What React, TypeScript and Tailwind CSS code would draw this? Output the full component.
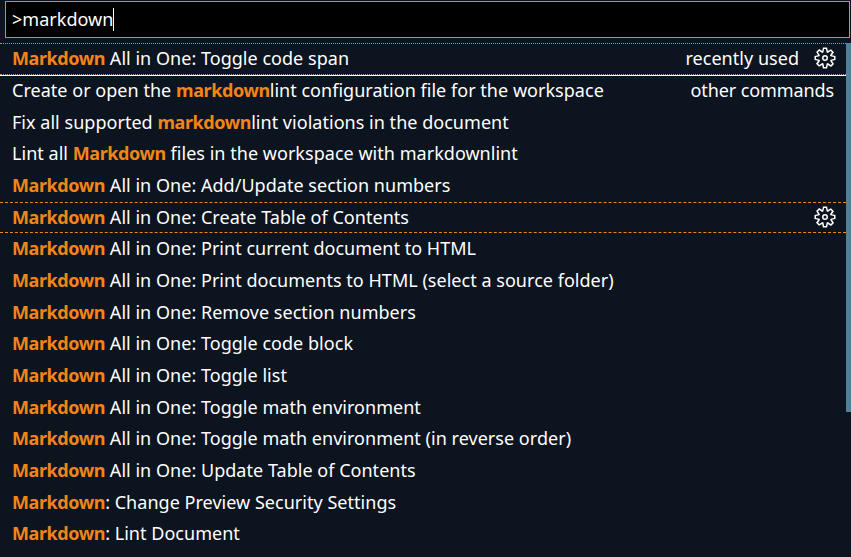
import React from 'react';

const Hl: React.FC<{ children: React.ReactNode }> = ({ children }) => (
  <span className="font-bold tracking-[-0.4px] text-[#f38518]">{children}</span>
);

const Gear: React.FC = () => (
  <svg width="24" height="24" viewBox="0 0 16 16" fill="currentColor" className="shrink-0">
    <path
      fillRule="evenodd"
      clipRule="evenodd"
      d="M9.1 4.4L8.6 2H7.4l-.5 2.4-.7.3-2-1.3-.9.8 1.3 2-.2.7-2.4.5v1.2l2.4.5.3.8-1.3 2 .8.8 2-1.3.8.3.4 2.3h1.2l.5-2.4.8-.3 2 1.3.8-.8-1.3-2 .3-.7 2.3-.5V7.4l-2.4-.5-.3-.8 1.3-2-.8-.8-2 1.3-.7-.2zM9.4 1l.5 2.4L12 2.1l2 2-1.4 2.1 2.4.4v2.8l-2.4.5L14 12l-2 2-2.1-1.4-.5 2.4H6.6l-.5-2.4L4 13.9l-2-2 1.4-2.1L1 9.4V6.6l2.4-.5L2.1 4l2-2 2.1 1.4.4-2.4h2.8zM10 8a2 2 0 1 1-4 0 2 2 0 0 1 4 0zM8 9a1 1 0 1 0 0-2 1 1 0 0 0 0 2z"
    />
  </svg>
);

const rows: React.ReactNode[] = [
  <>Fix all supported <Hl>markdown</Hl>lint violations in the document</>,
  <>Lint all <Hl>Markdown</Hl> files in the workspace with markdownlint</>,
  <><Hl>Markdown</Hl> All in One: Add/Update section numbers</>,
];

const rowsAfter: React.ReactNode[] = [
  <><Hl>Markdown</Hl> All in One: Print current document to HTML</>,
  <><Hl>Markdown</Hl> All in One: Print documents to HTML (select a source folder)</>,
  <><Hl>Markdown</Hl> All in One: Remove section numbers</>,
  <><Hl>Markdown</Hl> All in One: Toggle code block</>,
  <><Hl>Markdown</Hl> All in One: Toggle list</>,
  <><Hl>Markdown</Hl> All in One: Toggle math environment</>,
  <><Hl>Markdown</Hl> All in One: Toggle math environment (in reverse order)</>,
  <><Hl>Markdown</Hl> All in One: Update Table of Contents</>,
  <><Hl>Markdown</Hl>: Change Preview Security Settings</>,
  <><Hl>Markdown</Hl>: Lint Document</>,
];

const Row: React.FC<{ children: React.ReactNode }> = ({ children }) => (
  <div className="h-[31.7px] flex items-center pl-3 pb-px">
    <span>{children}</span>
  </div>
);

export default function App() {
  return (
    <div className="relative w-[851px] h-[557px] overflow-hidden bg-[#0c1420] text-white tracking-[0.03px] font-['Noto_Sans',sans-serif] text-[18px]">
      <div className="pl-[5px] pr-px pt-px">
        <div className="h-[37px] border-solid border border-[#f38518] bg-black flex items-center pl-[6px]">
          <span>&gt;markdown</span>
          <span className="w-px h-[23px] bg-white" />
        </div>
      </div>

      <div className="mt-[5px]">
        <div className="h-[32px] pr-[5px]">
          <div className="h-full border-y border-[#f38518] border-dotted flex items-center pl-3 pr-[9px] pb-[2px]">
            <span className="flex-1"><Hl>Markdown</Hl> All in One: Toggle code span</span>
            <span className="mr-[14px]">recently used</span>
            <Gear />
          </div>
        </div>
        <div className="h-[31.7px] border-t border-white flex items-center pl-3 pr-[17px] pb-px">
          <span className="flex-1">Create or open the <Hl>markdown</Hl>lint configuration file for the workspace</span>
          <span className="tracking-[-0.1px]">other commands</span>
        </div>
        {rows.map((r, i) => (
          <Row key={i}>{r}</Row>
        ))}
        <div className="h-[31.7px] pr-[5px]">
          <div className="h-full border-y border-[#f38518] border-dashed flex items-center pl-3 pr-[9px] pb-px">
            <span className="flex-1"><Hl>Markdown</Hl> All in One: Create Table of Contents</span>
            <Gear />
          </div>
        </div>
        {rowsAfter.map((r, i) => (
          <Row key={i}>{r}</Row>
        ))}
      </div>

      {/* scrollbar thumb */}
      <div className="absolute right-0 top-[43px] w-[5px] h-[369px] bg-[#4f8297]" />
    </div>
  );
}
